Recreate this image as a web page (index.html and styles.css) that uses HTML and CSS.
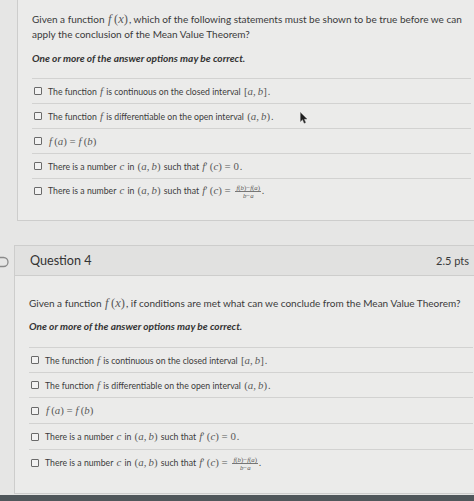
FILE: index.html
```html
<!DOCTYPE html>
<html>
<head>
<meta charset="utf-8">
<link rel="stylesheet" href="styles.css">
</head>
<body>
<div class="page">
  <section class="card card-top">
    <div class="body">
      <p class="prompt">Given a function <span class="m"><i>f</i>&#8201;(<i>x</i>)</span>, which of the following statements must be shown to be true before we can apply the conclusion of the Mean Value Theorem?</p>
      <p class="hint">One or more of the answer options may be correct.</p>
      <ul class="opts">
        <li><span class="box"></span><span class="t">The function <span class="m"><i>f</i></span> is continuous on the closed interval <span class="m">[<i>a</i>,&#8201;<i>b</i>]</span>.</span></li>
        <li><span class="box"></span><span class="t">The function <span class="m"><i>f</i></span> is differentiable on the open interval <span class="m">(<i>a</i>,&#8201;<i>b</i>)</span>.</span></li>
        <li><span class="box"></span><span class="t"><span class="m"><i>f</i>&#8201;(<i>a</i>) = <i>f</i>&#8201;(<i>b</i>)</span></span></li>
        <li><span class="box"></span><span class="t">There is a number <span class="m"><i>c</i></span> in <span class="m">(<i>a</i>,&#8201;<i>b</i>)</span> such that <span class="m"><i>f</i>&#8242;&#8201;(<i>c</i>) = 0</span>.</span></li>
        <li><span class="box"></span><span class="t">There is a number <span class="m"><i>c</i></span> in <span class="m">(<i>a</i>,&#8201;<i>b</i>)</span> such that <span class="m"><i>f</i>&#8242;&#8201;(<i>c</i>) = <span class="frac"><span class="num"><i>f</i>(<i>b</i>)&minus;<i>f</i>(<i>a</i>)</span><span class="den"><i>b</i>&minus;<i>a</i></span></span></span>.</span></li>
      </ul>
    </div>
    <svg class="cursor" width="8" height="12" viewBox="0 0 8 12"><path d="M0.5 0.5 L0.5 9.5 L2.6 7.6 L4.2 11.2 L5.6 10.6 L4.1 7.1 L7 7 Z" fill="#1e1e1e" stroke="#666" stroke-width="0.5"/></svg>
  </section>

  <section class="card card-q4">
    <svg class="flag" width="14" height="14" viewBox="0 0 14 14"><path d="M1 2.5 H7.5 A4.5 4.5 0 0 1 7.5 11.5 H1" fill="none" stroke="#8a8a8a" stroke-width="1.3"/></svg>
    <header class="head">
      <h2>Question 4</h2>
      <span class="pts">2.5 pts</span>
    </header>
    <div class="body">
      <p class="prompt">Given a function <span class="m"><i>f</i>&#8201;(<i>x</i>)</span>, if conditions are met what can we conclude from the Mean Value Theorem?</p>
      <p class="hint">One or more of the answer options may be correct.</p>
      <ul class="opts">
        <li><span class="box"></span><span class="t">The function <span class="m"><i>f</i></span> is continuous on the closed interval <span class="m">[<i>a</i>,&#8201;<i>b</i>]</span>.</span></li>
        <li><span class="box"></span><span class="t">The function <span class="m"><i>f</i></span> is differentiable on the open interval <span class="m">(<i>a</i>,&#8201;<i>b</i>)</span>.</span></li>
        <li class="r3"><span class="box"></span><span class="t"><span class="m"><i>f</i>&#8201;(<i>a</i>) = <i>f</i>&#8201;(<i>b</i>)</span></span></li>
        <li class="r4"><span class="box"></span><span class="t">There is a number <span class="m"><i>c</i></span> in <span class="m">(<i>a</i>,&#8201;<i>b</i>)</span> such that <span class="m"><i>f</i>&#8242;&#8201;(<i>c</i>) = 0</span>.</span></li>
        <li class="r5"><span class="box"></span><span class="t">There is a number <span class="m"><i>c</i></span> in <span class="m">(<i>a</i>,&#8201;<i>b</i>)</span> such that <span class="m"><i>f</i>&#8242;&#8201;(<i>c</i>) = <span class="frac"><span class="num"><i>f</i>(<i>b</i>)&minus;<i>f</i>(<i>a</i>)</span><span class="den"><i>b</i>&minus;<i>a</i></span></span></span>.</span></li>
      </ul>
    </div>
  </section>
  <div class="taskbar"></div>
</div>
</body>
</html>
```

FILE: styles.css
```css
* { box-sizing: border-box; }
html, body { margin: 0; padding: 0; }
body {
  width: 474px;
  height: 501px;
  overflow: hidden;
  background: #e6e6e5;
  font-family: Lato, "Open Sans", sans-serif;
  color: #3c3c3c;
}
.page {
  display: flex;
  flex-direction: column;
  height: 501px;
}
.card {
  position: relative;
  background: #ebebea;
  border: 1px solid #cdcdcc;
  margin-right: -20px;
}
.card-top {
  margin-left: 17px;
  border-top: none;
  height: 221px;
  padding: 12px 22px 0 14px;
}
.card-q4 {
  margin-left: 14px;
  margin-top: 24px;
  height: 249px;
}
.prompt {
  margin: 0;
  font-size: 10px;
  line-height: 15px;
  color: #3a3a3a;
}
.hint {
  margin: 9px 0 0;
  font-size: 10.1px;
  font-style: italic;
  font-weight: 700;
  color: #333;
  line-height: 14px;
}
.opts {
  list-style: none;
  margin: 13px 0 0;
  padding: 0;
}
.opts li {
  display: flex;
  align-items: center;
  height: 25px;
  border-top: 1px solid #d2d2d1;
  font-size: 8.7px;
  color: #3c3c3c;
  padding-left: 2px;
  white-space: nowrap;
}
.card-q4 .opts li.r3,
.card-q4 .opts li.r4 { height: 26px; }
.card-q4 .opts li.r5 { height: 27px; }
.t { white-space: nowrap; }
.box {
  width: 8px;
  height: 8px;
  border: 1px solid #6a6a6a;
  border-radius: 1px;
  background: #f2f2f2;
  margin-right: 6px;
  flex: none;
}
.m {
  font-family: "Liberation Serif", "DejaVu Serif", serif;
  font-size: 1.25em;
  line-height: 1;
  color: #595959;
  margin: 0 1px;
}
.m i { font-style: italic; }
.frac {
  display: inline-flex;
  flex-direction: column;
  align-items: center;
  vertical-align: middle;
  font-size: 6.8px;
  line-height: 7px;
  margin-left: 2px;
}
.num { border-bottom: 0.8px solid #777; padding: 0 1px; }
.den { padding: 0 1px; }
.cursor {
  position: absolute;
  left: 282px;
  top: 112px;
}
.card-q4 .head {
  display: flex;
  justify-content: space-between;
  align-items: center;
  height: 30px;
  background: #e1e1e0;
  border-bottom: 1px solid #cdcdcc;
  padding: 0 24px 0 15px;
}
.head h2 {
  margin: 0;
  font-size: 12.6px;
  font-weight: 400;
  color: #333;
}
.pts {
  font-size: 11px;
  color: #3a3a3a;
}
.card-q4 .body {
  padding: 20px 20px 0 14px;
}
.card-q4 .hint { margin-top: 8px; }
.card-q4 .opts { margin-top: 14px; }
.flag {
  position: absolute;
  left: -19px;
  top: 9px;
}
.taskbar {
  margin-top: auto;
  height: 6px;
  background: #50575b;
}
```
